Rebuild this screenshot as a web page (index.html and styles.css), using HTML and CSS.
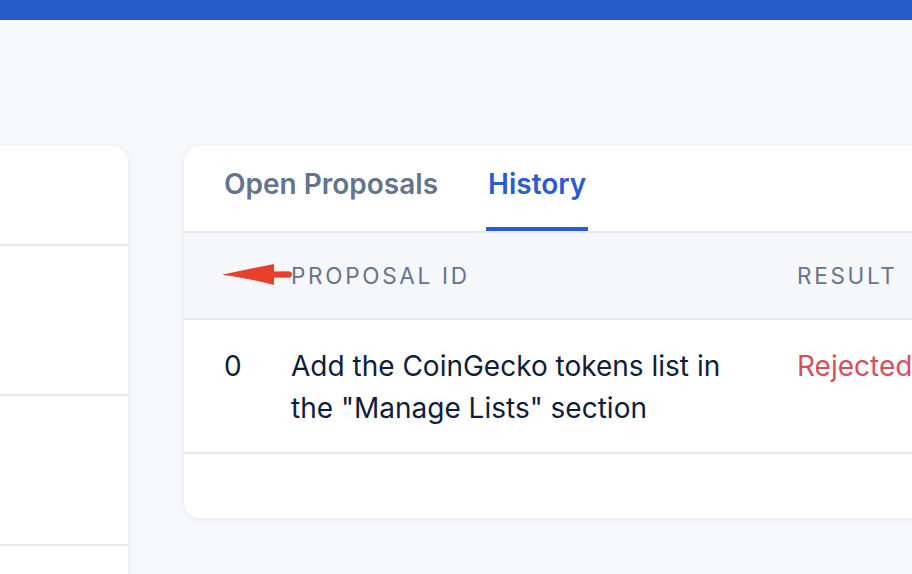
FILE: index.html
```html
<!DOCTYPE html>
<html lang="en">
<head>
<meta charset="utf-8">
<title>Governance</title>
<link rel="stylesheet" href="styles.css">
</head>
<body>
<div class="topbar"></div>
<main class="main">
  <section class="card side-card">
    <div class="side-row side-head"></div>
    <div class="side-row"></div>
    <div class="side-row"></div>
    <div class="side-row"></div>
  </section>
  <section class="card proposals">
    <nav class="tabs">
      <span class="tab">Open Proposals</span>
      <span class="tab active">History</span>
    </nav>
    <div class="table">
      <div class="row head">
        <div class="cell id-cell">
          <svg class="arrow" width="72" height="24" viewBox="0 0 72 24" aria-hidden="true">
            <path d="M1 10.5 C 18 7, 36 3, 52 0 L 52 7.5 L 66 7.3 Q 70 7.3 70 10.5 Q 70 13.7 66 13.7 L 52 13.6 L 52 21 C 36 17, 18 13, 1 11 Z" fill="#e8412b"/>
          </svg>
        </div>
        <div class="cell">Proposal ID</div>
        <div class="cell">Result</div>
      </div>
      <div class="row body">
        <div class="cell">0</div>
        <div class="cell title-cell">Add the CoinGecko tokens list in the "Manage Lists" section</div>
        <div class="cell rejected">Rejected</div>
      </div>
    </div>
    <div class="foot"></div>
  </section>
</main>
</body>
</html>
```

FILE: styles.css
```css
html, body {
  margin: 0;
  padding: 0;
  background: #f7f8fc;
  overflow: hidden;
  height: 100%;
}
body {
  font-family: Inter, "Noto Sans", sans-serif;
  color: #0f1e3a;
}
.topbar {
  height: 20px;
  background: #265cc9;
}
.main {
  display: flex;
  align-items: flex-start;
  gap: 56px;
  padding-top: 126px;
}
.card {
  background: #fff;
  border-radius: 16px;
  box-shadow: 0 1px 6px rgba(30, 45, 90, 0.07);
  flex: none;
}
.side-card {
  width: 400px;
  margin-left: -272px;
}
.side-row {
  height: 148px;
  border-bottom: 2px solid #e7ebf1;
}
.side-head {
  height: 98px;
}
.proposals {
  width: 900px;
}
.tabs {
  display: flex;
  gap: 48px;
  padding: 0 0 0 40px;
  height: 85px;
  border-bottom: 2px solid #e7ebf1;
}
.tab {
  display: flex;
  align-items: center;
  font-size: 28px;
  font-weight: 600;
  color: #64748b;
  padding: 0 2px 6px;
  margin-left: -2px;
  border-bottom: 4px solid transparent;
}
.tab.active {
  color: #2a5bd0;
  border-bottom-color: #2a5bd0;
}
.row {
  display: grid;
  grid-template-columns: 67px 506px 1fr;
  padding-left: 40px;
  border-bottom: 2px solid #e7ebf1;
}
.row.head {
  height: 85px;
  align-items: center;
  background: #f6f7fb;
  font-size: 22.5px;
  letter-spacing: 0.12em;
  text-transform: uppercase;
  color: #64748b;
}
.id-cell {
  position: relative;
  height: 100%;
}
.arrow {
  position: absolute;
  left: -2px;
  top: 31px;
}
.row.body {
  padding-top: 25px;
  padding-bottom: 23px;
  font-size: 28px;
  line-height: 42px;
}
.title-cell {
  padding-right: 48px;
}
.rejected {
  color: #d4505d;
}
.foot {
  height: 64px;
}
```
